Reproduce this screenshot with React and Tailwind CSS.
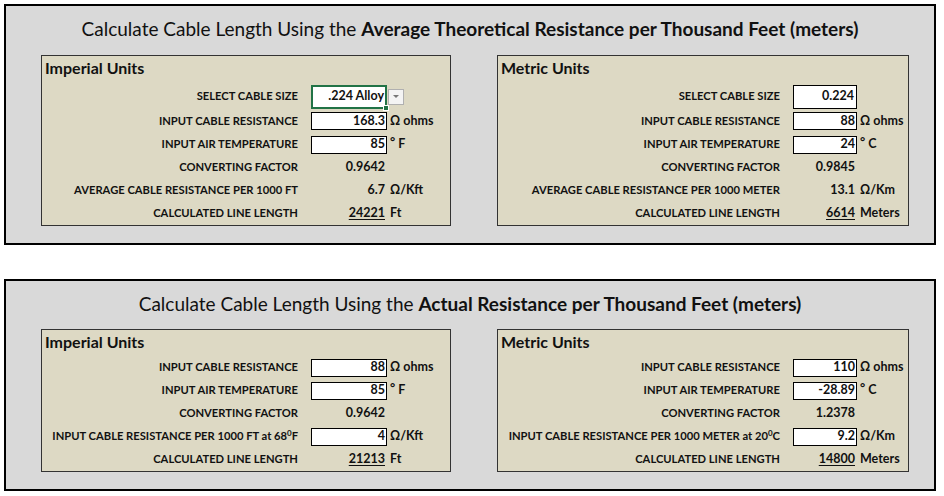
import React from 'react';

const font = { fontFamily: 'Lato, "Open Sans", sans-serif' };

function Box({ children, w }) {
  return (
    <div className={`h-[18px] border border-black bg-white flex items-center justify-end pr-[1px] ${w}`}>
      {children}
    </div>
  );
}

function SelectBox({ children, w }) {
  return (
    <div className="flex items-center">
      <div className={`relative h-[24px] border-2 border-[#217346] bg-white flex items-center justify-end pr-[1px] ${w}`}>
        {children}
        <div className="absolute -right-[4px] -bottom-[4px] w-[6px] h-[6px] bg-[#217346] border border-white"></div>
      </div>
      <div className="ml-[1px] w-[16px] h-[16px] border border-[#b0b0b0] bg-[#f4f4f4] flex items-center justify-center">
        <div className="w-0 h-0 border-l-[3px] border-r-[3px] border-t-[3px] border-l-transparent border-r-transparent border-t-[#777]"></div>
      </div>
    </div>
  );
}

function Row({ label, h, labelW, valW, kind, value, unit, underline }) {
  let val;
  if (kind === 'box') val = <Box w={valW}>{value}</Box>;
  else if (kind === 'select') val = <SelectBox w={valW}>{value}</SelectBox>;
  else if (kind === 'tall')
    val = (
      <div className={`h-[24px] border border-black bg-white flex items-center justify-end pr-[2px] ${valW}`}>
        {value}
      </div>
    );
  else
    val = (
      <div className={`flex justify-end pr-[2px] ${valW}`}>
        <span className={underline ? 'underline underline-offset-2' : ''}>{value}</span>
      </div>
    );
  return (
    <div className={`flex items-center ${h}`}>
      <div className={`text-right shrink-0 text-[11.2px] ${labelW}`}>{label}</div>
      <div className="ml-[13px] shrink-0 text-[12.5px]">{val}</div>
      {unit && <div className="ml-[3px] whitespace-nowrap text-[12.5px]">{unit}</div>}
    </div>
  );
}

function Panel({ title, w, labelW, valW, rows, headerH }) {
  return (
    <div className={`border border-[#333] bg-[#ddd9c4] font-bold text-[#111] ${w}`}>
      <div className={`pl-[3px] text-[16px] ${headerH}`}>{title}</div>
      {rows.map((r, i) => (
        <Row key={i} {...r} labelW={labelW} valW={valW} />
      ))}
    </div>
  );
}

const deg = (u) => (
  <span>
    <span className="relative -top-[2px]">°</span> {u}
  </span>
);

const sup0 = <sup className="text-[8px] -top-[4px]">0</sup>;

export default function App() {
  const imp1 = [
    { label: 'SELECT CABLE SIZE', h: 'h-[25px]', kind: 'select', value: '.224 Alloy' },
    { label: 'INPUT CABLE RESISTANCE', h: 'h-[24px]', kind: 'box', value: '168.3', unit: 'Ω ohms' },
    { label: 'INPUT AIR TEMPERATURE', h: 'h-[23px]', kind: 'box', value: '85', unit: deg('F') },
    { label: 'CONVERTING FACTOR', h: 'h-[23px]', value: '0.9642' },
    { label: 'AVERAGE CABLE RESISTANCE PER 1000 FT', h: 'h-[23px]', value: '6.7', unit: 'Ω/Kft' },
    { label: 'CALCULATED LINE LENGTH', h: 'h-[23px]', value: '24221', unit: 'Ft', underline: true },
  ];
  const met1 = [
    { label: 'SELECT CABLE SIZE', h: 'h-[25px]', kind: 'tall', value: '0.224' },
    { label: 'INPUT CABLE RESISTANCE', h: 'h-[24px]', kind: 'box', value: '88', unit: 'Ω ohms' },
    { label: 'INPUT AIR TEMPERATURE', h: 'h-[23px]', kind: 'box', value: '24', unit: deg('C') },
    { label: 'CONVERTING FACTOR', h: 'h-[23px]', value: '0.9845' },
    { label: 'AVERAGE CABLE RESISTANCE PER 1000 METER', h: 'h-[23px]', value: '13.1', unit: 'Ω/Km' },
    { label: 'CALCULATED LINE LENGTH', h: 'h-[23px]', value: '6614', unit: 'Meters', underline: true },
  ];
  const imp2 = [
    { label: 'INPUT CABLE RESISTANCE', h: 'h-[23px]', kind: 'box', value: '88', unit: 'Ω ohms' },
    { label: 'INPUT AIR TEMPERATURE', h: 'h-[23px]', kind: 'box', value: '85', unit: deg('F') },
    { label: 'CONVERTING FACTOR', h: 'h-[23px]', value: '0.9642' },
    {
      label: <span>INPUT CABLE RESISTANCE PER 1000 FT at 68{sup0}F</span>,
      h: 'h-[23px]',
      kind: 'box',
      value: '4',
      unit: 'Ω/Kft',
    },
    { label: 'CALCULATED LINE LENGTH', h: 'h-[23px]', value: '21213', unit: 'Ft', underline: true },
  ];
  const met2 = [
    { label: 'INPUT CABLE RESISTANCE', h: 'h-[23px]', kind: 'box', value: '110', unit: 'Ω ohms' },
    { label: 'INPUT AIR TEMPERATURE', h: 'h-[23px]', kind: 'box', value: '-28.89', unit: deg('C') },
    { label: 'CONVERTING FACTOR', h: 'h-[23px]', value: '1.2378' },
    {
      label: <span>INPUT CABLE RESISTANCE PER 1000 METER at 20{sup0}C</span>,
      h: 'h-[23px]',
      kind: 'box',
      value: '9.2',
      unit: 'Ω/Km',
    },
    { label: 'CALCULATED LINE LENGTH', h: 'h-[23px]', value: '14800', unit: 'Meters', underline: true },
  ];

  return (
    <div className="w-[944px] h-[496px] bg-white pt-[4px] pl-[4px]" style={font}>
      <div className="w-[932px] h-[241px] border-2 border-black bg-[#d9d9d9] flex flex-col">
        <div className="h-[49px] flex items-center justify-center text-[19px] text-[#111] pb-[2px]">
          <span>
            Calculate Cable Length Using the{' '}
            <b>Average Theoretical Resistance per Thousand Feet (meters)</b>
          </span>
        </div>
        <div className="flex pl-[35px] gap-[46px]">
          <Panel title="Imperial Units" w="w-[410px]" labelW="w-[256px]" valW="w-[76px]" rows={imp1} headerH="h-[28px]" />
          <Panel title="Metric Units" w="w-[412px]" labelW="w-[282px]" valW="w-[64px]" rows={met1} headerH="h-[28px]" />
        </div>
      </div>

      <div className="mt-[34px] w-[932px] h-[212px] border-2 border-black bg-[#d9d9d9] flex flex-col">
        <div className="h-[48px] flex items-center justify-center text-[19px] text-[#111] pb-[2px]">
          <span>
            Calculate Cable Length Using the <b>Actual Resistance per Thousand Feet (meters)</b>
          </span>
        </div>
        <div className="flex pl-[35px] gap-[46px]">
          <Panel title="Imperial Units" w="w-[410px]" labelW="w-[256px]" valW="w-[76px]" rows={imp2} headerH="h-[26px]" />
          <Panel title="Metric Units" w="w-[412px]" labelW="w-[282px]" valW="w-[64px]" rows={met2} headerH="h-[26px]" />
        </div>
      </div>
    </div>
  );
}
